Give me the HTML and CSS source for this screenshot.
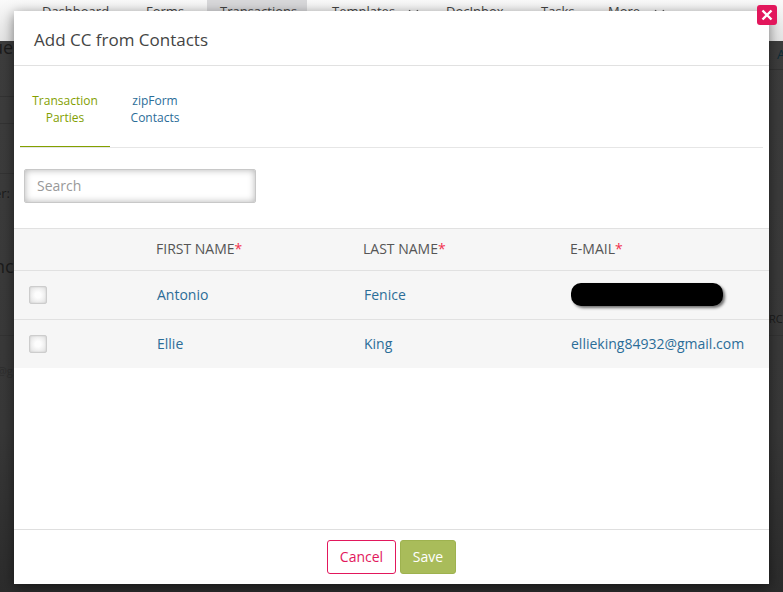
FILE: index.html
```html
<!DOCTYPE html>
<html lang="en">
<head>
<meta charset="utf-8">
<title>Add CC from Contacts</title>
<link rel="stylesheet" href="styles.css">
</head>
<body>
<div class="page">
  <nav class="topnav">
    <span class="nav-item nav-dash">Dashboard</span>
    <span class="nav-item nav-forms">Forms</span>
    <span class="nav-item nav-active">Transactions</span>
    <span class="nav-item nav-templates">Templates <svg class="chev" viewBox="0 0 10 6"><path d="M1 1l4 4 4-4" fill="none" stroke="#555" stroke-width="1.2"/></svg></span>
    <span class="nav-item nav-inbox">DocInbox</span>
    <span class="nav-item nav-tasks">Tasks</span>
    <span class="nav-item nav-more">More <svg class="chev" viewBox="0 0 10 6"><path d="M1 1l4 4 4-4" fill="none" stroke="#555" stroke-width="1.2"/></svg></span>
  </nav>
  <div class="backdrop">
    <span class="frag frag-ue">ue</span>
    <span class="frag frag-er">er:</span>
    <span class="frag frag-nc">nc</span>
    <span class="frag frag-at">@g</span>
    <span class="frag frag-a">A</span>
    <span class="frag frag-rc">RC</span>
    <i class="rule rule-l1"></i>
    <i class="rule rule-l2"></i>
    <i class="rule rule-l3"></i>
    <i class="rule rule-l4"></i>
    <i class="rule rule-r1"></i>
    <i class="rule rule-r2"></i>
  </div>
</div>

<section class="modal">
  <header class="modal-head">Add CC from Contacts</header>
  <div class="tabs">
    <div class="tab tab-active">Transaction<br>Parties</div>
    <div class="tab">zipForm<br>Contacts</div>
  </div>
  <div class="search-wrap">
    <input class="search" type="text" placeholder="Search">
  </div>
  <div class="table">
    <div class="row row-head">
      <div class="c-check"></div>
      <div class="c-first">FIRST NAME<b>*</b></div>
      <div class="c-last">LAST NAME<b>*</b></div>
      <div class="c-mail">E-MAIL<b>*</b></div>
    </div>
    <div class="row row-body">
      <div class="c-check"><span class="check"></span></div>
      <div class="c-first">Antonio</div>
      <div class="c-last">Fenice</div>
      <div class="c-mail"><span class="redact"></span></div>
    </div>
    <div class="row row-body row-last">
      <div class="c-check"><span class="check"></span></div>
      <div class="c-first">Ellie</div>
      <div class="c-last">King</div>
      <div class="c-mail">ellieking84932@gmail.com</div>
    </div>
  </div>
  <footer class="modal-foot">
    <button class="btn btn-cancel" type="button">Cancel</button>
    <button class="btn btn-save" type="button">Save</button>
  </footer>
  <button class="close" type="button" aria-label="Close">
    <svg viewBox="0 0 12 12"><path d="M1.5 1.5l9 9M10.5 1.5l-9 9" stroke="#fff" stroke-width="2.4" fill="none"/></svg>
  </button>
</section>
</body>
</html>
```
FILE: styles.css
```css
* { box-sizing: border-box; }
html, body { margin: 0; height: 100%; overflow: hidden; }
body { font-family: "Open Sans", "Liberation Sans", sans-serif; background: #3b3b3b; color: #444; }

.page { height: 592px; display: flex; flex-direction: column; }
.topnav { height: 41px; flex: none; position: relative; background: linear-gradient(#fafafa, #e4e4e4); overflow: hidden; font-size: 13px; color: #444; }
.nav-item { position: absolute; top: 0; line-height: 22px; white-space: nowrap; }
.nav-dash { left: 42px; }
.nav-forms { left: 146px; }
.nav-active { left: 207px; width: 100px; height: 41px; padding-left: 13px; background: #d9d9db; }
.nav-templates { left: 332px; }
.nav-inbox { left: 446px; }
.nav-tasks { left: 541px; }
.nav-more { left: 608px; }
.chev { width: 11px; height: 7px; margin-left: 10px; vertical-align: 0; }

.backdrop { flex: 1; position: relative; background: linear-gradient(#3d3d3d, #383838 70%, #2c2c2c); font-size: 14px; color: #1c1c1c; }
.frag { position: absolute; white-space: nowrap; }
.frag-ue { left: -8px; top: 0; font-size: 18px; line-height: 12px; }
.frag-er { left: -6px; top: 143px; font-size: 13px; }
.frag-nc { left: -6px; top: 213px; font-size: 18px; }
.frag-at { left: -3px; top: 322px; font-size: 11px; color: #2e2e2e; }
.frag-a { left: 777px; top: 4px; color: #0e2c38; font-size: 13px; }
.frag-rc { left: 769px; top: 270px; font-size: 11px; }
.rule { position: absolute; height: 1px; background: #333; }
.rule-l1 { left: 0; width: 14px; top: 55px; }
.rule-l2 { left: 0; width: 14px; top: 82px; }
.rule-l3 { left: 0; width: 14px; top: 132px; }
.rule-l4 { left: 0; width: 14px; top: 294px; }
.rule-r1 { left: 769px; width: 14px; top: 28px; }
.rule-r2 { left: 769px; width: 14px; top: 294px; }

.modal { position: absolute; left: 14px; top: 11px; width: 755px; height: 573px; background: #fff; display: flex; flex-direction: column; box-shadow: 0 3px 12px rgba(0,0,0,.5); }
.modal-head { height: 55px; flex: none; padding: 3px 20px 0; line-height: 51px; font-size: 17px; color: #444; border-bottom: 1px solid #e1e1e1; }
.tabs { height: 82px; flex: none; margin: 0 6px; display: flex; border-bottom: 1px solid #e6e6e6; font-size: 12px; line-height: 17px; color: #2b6d98; text-align: center; }
.tab { width: 90px; padding-top: 26px; }
.tab-active { color: #83a000; border-bottom: 1px solid #83a000; }
.search-wrap { height: 80px; flex: none; padding: 21px 0 0 10px; }
.search { display: block; width: 232px; height: 34px; padding: 0 12px 2px; border: 1px solid #c8c8c8; border-radius: 2px; font: 14px "Open Sans", "Liberation Sans", sans-serif; color: #444; box-shadow: inset 0 0 7px rgba(0,0,0,.3); outline: 0; }
.search::placeholder { color: #999; opacity: 1; }

.table { flex: none; border-top: 1px solid #e1e1e1; background: #f6f6f6; font-size: 14px; }
.row { display: flex; align-items: center; padding-bottom: 2px; }
.row-head { height: 42px; color: #555; font-size: 14px; border-bottom: 1px solid #e1e1e1; }
.row-head .c-check { width: 142px; }
.row-head b { font-weight: 400; color: #f2334f; }
.row-body { height: 49px; color: #2b6d98; border-bottom: 1px solid #e1e1e1; }
.row-last { height: 48px; border-bottom: 0; }
.c-check { width: 143px; padding-left: 15px; flex: none; display: flex; }
.row-body .c-check { margin-top: 2px; }
.c-first { width: 207px; flex: none; }
.c-last { width: 207px; flex: none; }
.c-mail { flex: 1; }
.check { width: 18px; height: 18px; border: 1px solid #cdcdcd; border-radius: 2px; background: radial-gradient(#fdfdfd 25%, #dfdfdf); box-shadow: inset 0 0 2px rgba(0,0,0,.12); }
.redact { display: block; width: 152px; height: 23px; border-radius: 10px; background: #000; box-shadow: 2px 2px 3px rgba(0,0,0,.55); }

.modal-foot { margin-top: auto; height: 55px; flex: none; border-top: 1px solid #dfdfdf; display: flex; justify-content: center; align-items: flex-start; padding: 10px 0 0 0; gap: 4px; }
.btn { height: 34px; border-radius: 3px; font: 14px "Open Sans", "Liberation Sans", sans-serif; padding: 0 0 2px; }
.btn-cancel { width: 69px; background: #fff; border: 1px solid #e2175c; color: #e2175c; }
.btn-save { width: 56px; background: #a9bc5a; border: 1px solid #9eb24f; color: #fff; font-weight: 500; }
.close { position: absolute; right: -8px; top: -6px; width: 20px; height: 20px; padding: 4px; border: 0; border-radius: 3px; background: #e2175c; display: flex; }
.close svg { width: 12px; height: 12px; display: block; }
```
